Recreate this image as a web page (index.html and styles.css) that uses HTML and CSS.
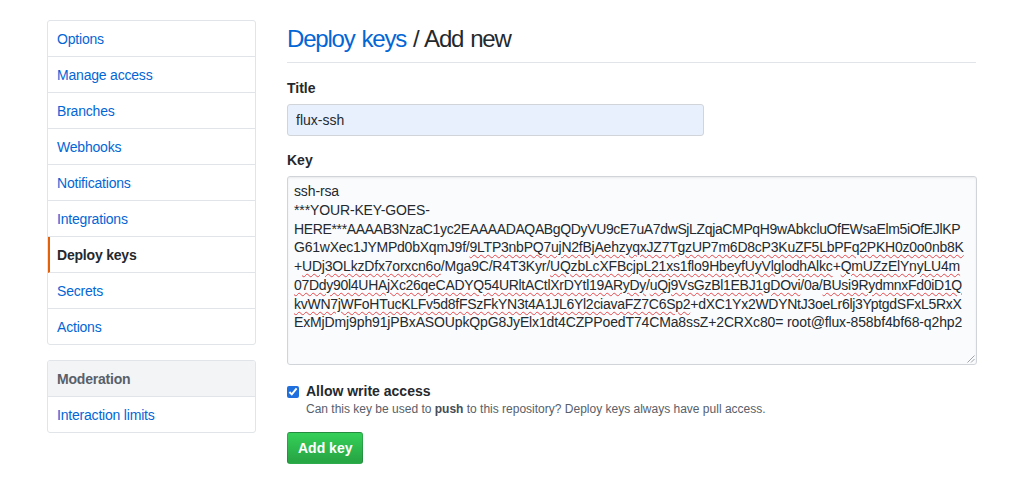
FILE: index.html
```html
<!DOCTYPE html>
<html lang="en">
<head>
<meta charset="utf-8">
<title>Deploy keys / Add new</title>
<link rel="stylesheet" href="styles.css">
</head>
<body>
<div class="layout">
  <aside class="sidebar">
    <nav class="menu">
      <a class="menu-item" href="#">Options</a>
      <a class="menu-item" href="#">Manage access</a>
      <a class="menu-item" href="#">Branches</a>
      <a class="menu-item" href="#">Webhooks</a>
      <a class="menu-item" href="#">Notifications</a>
      <a class="menu-item" href="#">Integrations</a>
      <a class="menu-item selected" href="#">Deploy keys</a>
      <a class="menu-item" href="#">Secrets</a>
      <a class="menu-item" href="#">Actions</a>
    </nav>
    <nav class="menu">
      <div class="menu-heading">Moderation</div>
      <a class="menu-item" href="#">Interaction limits</a>
    </nav>
  </aside>
  <main class="content">
    <div class="subhead">
      <h2 class="subhead-heading"><a href="#">Deploy keys</a> / Add new</h2>
    </div>
    <form class="form">
      <div class="form-group">
        <label class="form-label" for="title">Title</label>
        <input class="form-control title-input" id="title" type="text" value="flux-ssh">
      </div>
      <div class="form-group">
        <label class="form-label">Key</label>
        <div class="form-control key-area">
          <div class="key-line">ssh-rsa</div>
          <div class="key-line">***YOUR-KEY-GOES-</div>
          <div class="key-line l3">HERE***AAAAB3NzaC1yc2EAAAADAQABgQDyVU9cE7uA7dwSjLZqjaCMPqH9wAbkcluOfEWsaElm5iOfEJlKP</div>
          <div class="key-line l4">G61wXec1JYMPd0bXqmJ9f/<span class="sp">9LTP3nbPQ7ujN2fBjAehzyqxJZ7TgzUP7m6D8cP3KuZF5LbPFq2PKH0z0o0nb8K</span></div>
          <div class="key-line l5">+<span class="sp">UDj3OLkzDfx7orxcn6o</span>/Mga9C/R4T3Kyr/<span class="sp">UQzbLcXFBcjpL21xs1flo9HbeyfUyVlglodhAlkc</span>+<span class="sp">QmUZzElYnyLU4m</span></div>
          <div class="key-line l6"><span class="sp">07Ddy90l4UHAjXc26qeCADYQ54URltACtlXrDYtl19ARyDy</span>/<span class="sp">uQj9VsGzBl1EBJ1gDOvi</span>/0a/<span class="sp">BUsi9RydmnxFd0iD1Q</span></div>
          <div class="key-line l7"><span class="sp">kvWN7jWFoHTucKLFv5d8fFSzFkYN3t4A1JL6Yl2ciavaFZ7C6Sp2</span>+dXC1Yx2WDYNtJ3oeLr6lj3YptgdSFxL5RxX</div>
          <div class="key-line">ExMjDmj9ph91jPBxASOUpkQpG8JyElx1dt4CZPPoedT74CMa8ssZ+2CRXc80= root@flux-858bf4bf68-q2hp2</div>
          <svg class="grip" width="9" height="9" viewBox="0 0 9 9"><path d="M8.5 1.5 L1.5 8.5 M8.5 5 L5 8.5" stroke="#a0a4a8" stroke-width="1" fill="none"/></svg>
        </div>
      </div>
      <div class="form-checkbox">
        <input class="check" type="checkbox" checked id="write">
        <div class="check-text">
          <label class="check-label" for="write">Allow write access</label>
          <p class="note">Can this key be used to <strong>push</strong> to this repository? Deploy keys always have pull access.</p>
        </div>
      </div>
      <button class="btn-primary" type="button">Add key</button>
    </form>
  </main>
</div>
</body>
</html>
```

FILE: styles.css
```css
* { box-sizing: border-box; }
html, body { margin: 0; padding: 0; background: #fff; }
body {
  font-family: "Liberation Sans", Arial, sans-serif;
  font-size: 14px;
  color: #24292e;
}
a { color: #0366d6; text-decoration: none; }

.layout {
  display: flex;
  align-items: flex-start;
  gap: 31px;
  padding: 20px 0 0 47px;
}

.sidebar {
  width: 209px;
  flex: none;
  display: flex;
  flex-direction: column;
  gap: 15px;
}

.menu {
  display: flex;
  flex-direction: column;
  border: 1px solid #e1e4e8;
  border-radius: 3px;
  overflow: hidden;
}

.menu-item, .menu-heading {
  display: block;
  height: 36px;
  line-height: 36px;
  padding: 0 9px;
  border-bottom: 1px solid #e1e4e8;
  font-size: 14px;
  letter-spacing: -0.2px;
  white-space: nowrap;
}
.menu > :last-child { border-bottom: 0; height: 35px; }

.menu-item.selected {
  color: #24292e;
  font-weight: 700;
  border-left: 2px solid #e36209;
  padding-left: 7px;
}

.menu-heading {
  background: #f3f4f6;
  color: #586069;
  font-weight: 700;
}

.content {
  width: 689px;
  flex: none;
}

.subhead {
  padding-top: 4px;
  padding-bottom: 8px;
  border-bottom: 1px solid #e1e4e8;
  margin-bottom: 16px;
}
.subhead-heading {
  margin: 0;
  font-size: 24px;
  font-weight: 400;
  line-height: 30px;
  letter-spacing: -1.2px;
  word-spacing: 1.5px;
}

.form { display: flex; flex-direction: column; }

.form-group {
  display: flex;
  flex-direction: column;
  gap: 7px;
  margin-bottom: 15px;
}
.form-label {
  font-weight: 700;
  font-size: 14px;
  line-height: 18px;
}

.form-control {
  border: 1px solid #d1d5da;
  border-radius: 3px;
  font-family: inherit;
  font-size: 14px;
  color: #24292e;
}

.title-input {
  width: 417px;
  height: 32px;
  padding: 6px 8px;
  background: #e8f0fe;
  outline: none;
}

.key-area {
  position: relative;
  width: 690px;
  height: 189px;
  padding: 5px 7px 5px 6px;
  background: #fafbfc;
  box-shadow: inset 0 1px 2px rgba(27,31,35,.075);
}
.key-line {
  white-space: nowrap;
  line-height: 18.75px;
  font-size: 14px;
  letter-spacing: -0.13px;
}
.key-line.l3 { letter-spacing: -0.36px; }
.key-line.l4 { letter-spacing: -0.23px; }
.key-line.l5 { letter-spacing: -0.19px; }
.key-line.l6 { letter-spacing: -0.29px; }
.key-line.l7 { letter-spacing: -0.27px; }
.sp {
  text-decoration: underline wavy #e5484d;
  text-decoration-thickness: 1px;
  text-underline-offset: 2px;
}
.grip {
  position: absolute;
  right: 1px;
  bottom: 1px;
}

.form-checkbox {
  display: flex;
  align-items: flex-start;
  gap: 7px;
  margin-top: 2px;
}
.check {
  width: 12px;
  height: 12px;
  margin: 4px 0 0 0;
  accent-color: #1f6fde;
  flex: none;
}
.check-text { display: flex; flex-direction: column; }
.check-label {
  font-weight: 700;
  font-size: 14px;
  line-height: 18px;
}
.note {
  margin: 0;
  font-size: 12px;
  line-height: 18px;
  color: #586069;
}
.note strong { color: #444d56; font-weight: 700; }

.btn-primary {
  align-self: flex-start;
  margin-top: 14px;
  height: 32px;
  padding: 0 10px;
  border: 1px solid rgba(27,31,35,.2);
  border-radius: 3px;
  background-image: linear-gradient(180deg, #34d058, #28a745 90%);
  color: #fff;
  font-family: inherit;
  font-size: 14px;
  font-weight: 700;
  cursor: pointer;
}
```
